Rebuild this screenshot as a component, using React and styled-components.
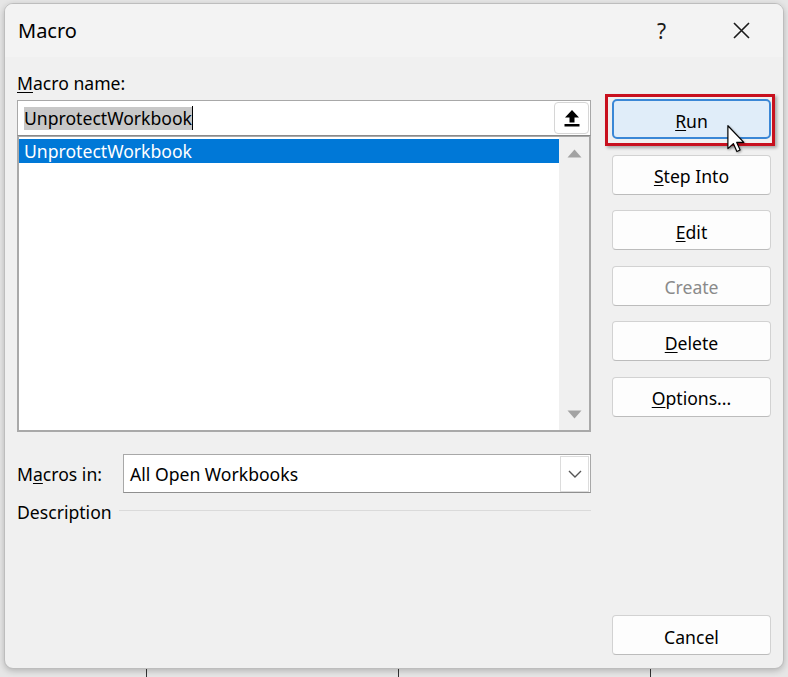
import React from "react";
import styled, { createGlobalStyle } from "styled-components";

const Global = createGlobalStyle`
  html, body { margin: 0; padding: 0; }
  body {
    width: 788px; height: 677px; overflow: hidden;
    background: #e4e4e4;
    font-family: "Noto Sans", "Liberation Sans", sans-serif;
    color: #000;
  }
  u { text-decoration-thickness: 1px; text-underline-offset: 2px; }
`;

const Backdrop = styled.div`
  width: 788px;
  height: 677px;
  box-sizing: border-box;
  padding: 3px 4px 8px 4px;
  background:
    linear-gradient(90deg, transparent 146px, #333 146px, #333 147px, transparent 147px,
      transparent 398px, #333 398px, #333 399px, transparent 399px,
      transparent 650px, #333 650px, #333 651px, transparent 651px) bottom / 100% 10px no-repeat,
    #e6e6e6;
`;

const Dialog = styled.div`
  width: 780px;
  height: 666px;
  box-sizing: border-box;
  border: 1px solid #bdbdbd;
  border-radius: 9px;
  background: #f0f0f0;
  box-shadow: 0 2px 6px rgba(0, 0, 0, 0.22);
  display: flex;
  flex-direction: column;
  overflow: hidden;
`;

const TitleBar = styled.div`
  height: 53px;
  flex: none;
  display: flex;
  align-items: center;
  padding: 0 33px 0 13px;
  background: #f3f3f3;
`;

const Title = styled.div`
  font-size: 20px;
  line-height: 28px;
  flex: 1;
  margin-top: 1px;
`;

const TitleActions = styled.div`
  display: flex;
  align-items: center;
  gap: 67px;
`;

const HelpGlyph = styled.span`
  font-size: 21px;
  line-height: 28px;
  color: #1a1a1a;
`;

const Body = styled.div`
  flex: 1;
  display: flex;
  gap: 21px;
  padding: 13px 12px 13px 12px;
`;

const LeftCol = styled.div`
  width: 574px;
  display: flex;
  flex-direction: column;
`;

const Label = styled.div`
  font-size: 17.6px;
  line-height: 24px;
  white-space: nowrap;
  padding-top: 1px;
`;

const NameLabel = styled(Label)`
  margin-bottom: 5px;
`;

const NameInput = styled.div`
  height: 36px;
  box-sizing: border-box;
  border: 1px solid #a8a8a8;
  border-bottom-color: #8a8a8a;
  background: #fff;
  display: flex;
  align-items: center;
  padding: 0 1px 0 6px;
`;

const Selection = styled.span`
  font-size: 17.6px;
  line-height: 23px;
  background: #c8c8c8;
  color: #000;
`;

const Caret = styled.span`
  width: 1px;
  height: 24px;
  background: #000;
`;

const PickButton = styled.div`
  margin-left: auto;
  width: 35px;
  height: 32px;
  box-sizing: border-box;
  border: 1px solid #d6d6d6;
  border-radius: 4px;
  background: #fff;
  display: flex;
  align-items: center;
  justify-content: center;
`;

const ListBox = styled.div`
  height: 296px;
  box-sizing: border-box;
  border: 2px solid #a9a9a9;
  border-top-width: 1px;
  background: #fff;
  display: flex;
`;

const Items = styled.div`
  flex: 1;
  padding-top: 2px;
`;

const Item = styled.div`
  height: 24px;
  font-size: 17.6px;
  line-height: 25px;
  padding-left: 5px;
  background: ${(p) => (p.$selected ? "#0078d7" : "transparent")};
  color: ${(p) => (p.$selected ? "#fff" : "#000")};
`;

const ScrollBar = styled.div`
  width: 30px;
  background: #f0f0f0;
  display: flex;
  flex-direction: column;
  justify-content: space-between;
  align-items: center;
  padding: 12px 0 11px;
`;

const MacrosRow = styled.div`
  margin-top: 22px;
  height: 39px;
  display: flex;
  align-items: center;
`;

const MacrosLabel = styled(Label)`
  width: 106px;
  flex: none;
`;

const Select = styled.div`
  flex: 1;
  height: 39px;
  box-sizing: border-box;
  border: 1px solid #a8a8a8;
  border-bottom-color: #8f8f8f;
  background: #fff;
  display: flex;
  align-items: center;
  padding: 0 1px 0 6px;
  font-size: 17.6px;
`;

const SelectText = styled.span`
  padding-top: 1px;
`;

const DropButton = styled.div`
  margin-left: auto;
  width: 29px;
  height: 36px;
  box-sizing: border-box;
  border: 1px solid #dcdcdc;
  background: #fff;
  display: flex;
  align-items: center;
  justify-content: center;
`;

const DescRow = styled.div`
  margin-top: 6px;
  display: flex;
  align-items: center;
  gap: 7px;
`;

const Rule = styled.div`
  flex: 1;
  height: 1px;
  background: #dadada;
  margin-top: -2px;
`;

const RightCol = styled.div`
  width: 159px;
  display: flex;
  flex-direction: column;
  gap: 15.5px;
  padding-top: 29px;
`;

const Button = styled.div`
  height: 40px;
  box-sizing: border-box;
  border: 1px solid #d2d2d2;
  border-bottom-color: #bcbcbc;
  border-radius: 4px;
  background: #fdfdfd;
  display: flex;
  align-items: center;
  justify-content: center;
  padding-top: 3px;
  font-size: 17.6px;
  color: ${(p) => (p.$disabled ? "#8a8a8a" : "#000")};
`;

const PrimaryButton = styled(Button)`
  background: #e0edf9;
  border: 2px solid #3a87d6;
  border-radius: 5px;
`;

const CancelButton = styled(Button)`
  margin-top: auto;
`;

const Highlight = styled.div`
  position: relative;
  &::after {
    content: "";
    position: absolute;
    top: -5px;
    right: -4px;
    bottom: -7px;
    left: -7px;
    border: 3px solid #c8101e;
    box-shadow: 2px 2px 3px rgba(0, 0, 0, 0.3);
    pointer-events: none;
  }
`;

const Cursor = styled.svg`
  position: absolute;
  left: 115px;
  top: 26px;
  z-index: 2;
  filter: drop-shadow(1px 1px 1px rgba(0, 0, 0, 0.35));
`;

const Up = () => (
  <svg width="16" height="17" viewBox="0 0 16 17">
    <path d="M8 0 L15 7.5 H10.5 V12.5 H5.5 V7.5 H1 Z" fill="#000" />
    <rect x="0.5" y="14" width="15" height="2.5" fill="#000" />
  </svg>
);

const Tri = ({ down }) => (
  <svg width="15" height="9" viewBox="0 0 15 9">
    <path d={down ? "M0.5 0.5 H14.5 L7.5 8.5 Z" : "M7.5 0.5 L14.5 8.5 H0.5 Z"} fill="#a3a3a3" />
  </svg>
);

export default function App() {
  return (
    <>
      <Global />
      <Backdrop>
        <Dialog>
          <TitleBar>
            <Title>Macro</Title>
            <TitleActions>
              <HelpGlyph>?</HelpGlyph>
              <svg width="17" height="17" viewBox="0 0 17 17">
                <path d="M1 1 L16 16 M16 1 L1 16" stroke="#1a1a1a" strokeWidth="1.6" fill="none" />
              </svg>
            </TitleActions>
          </TitleBar>
          <Body>
            <LeftCol>
              <NameLabel>
                <u>M</u>acro name:
              </NameLabel>
              <NameInput>
                <Selection>UnprotectWorkbook</Selection>
                <Caret />
                <PickButton>
                  <Up />
                </PickButton>
              </NameInput>
              <ListBox>
                <Items>
                  <Item $selected>UnprotectWorkbook</Item>
                </Items>
                <ScrollBar>
                  <Tri />
                  <Tri down />
                </ScrollBar>
              </ListBox>
              <MacrosRow>
                <MacrosLabel>
                  M<u>a</u>cros in:
                </MacrosLabel>
                <Select>
                  <SelectText>All Open Workbooks</SelectText>
                  <DropButton>
                    <svg width="14" height="8" viewBox="0 0 14 8">
                      <path d="M1 1 L7 7 L13 1" stroke="#555" strokeWidth="1.4" fill="none" />
                    </svg>
                  </DropButton>
                </Select>
              </MacrosRow>
              <DescRow>
                <Label>Description</Label>
                <Rule />
              </DescRow>
            </LeftCol>
            <RightCol>
              <Highlight>
                <PrimaryButton>
                  <u>R</u>un
                </PrimaryButton>
                <Cursor width="18" height="28" viewBox="0 0 12 19">
                  <path
                    d="M0.5 0.5 L0.5 16 L4.2 12.6 L6.6 18 L8.8 17 L6.5 11.8 L11.3 11.8 Z"
                    fill="#fff"
                    stroke="#000"
                    strokeWidth="0.8"
                    strokeLinejoin="round"
                  />
                </Cursor>
              </Highlight>
              <Button>
                <u>S</u>tep Into
              </Button>
              <Button>
                <u>E</u>dit
              </Button>
              <Button $disabled>Create</Button>
              <Button>
                <u>D</u>elete
              </Button>
              <Button>
                <u>O</u>ptions...
              </Button>
              <CancelButton>Cancel</CancelButton>
            </RightCol>
          </Body>
        </Dialog>
      </Backdrop>
    </>
  );
}
